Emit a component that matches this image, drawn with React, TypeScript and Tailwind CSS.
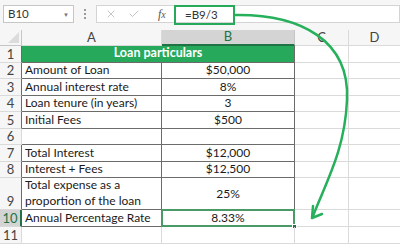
import { X, Check } from 'lucide-react'

type Row = { n: number; a?: string; b?: string; h: string; kind: 'head' | 'table' | 'empty' | 'sel'; topDark?: boolean }

const rows: Row[] = [
  { n: 1, a: 'Loan particulars', h: 'h-[16.5px]', kind: 'head' },
  { n: 2, a: 'Amount of Loan', b: '$50,000', h: 'h-[16.5px]', kind: 'table' },
  { n: 3, a: 'Annual interest rate', b: '8%', h: 'h-[16.5px]', kind: 'table' },
  { n: 4, a: 'Loan tenure (in years)', b: '3', h: 'h-[16.5px]', kind: 'table' },
  { n: 5, a: 'Initial Fees', b: '$500', h: 'h-[16.5px]', kind: 'table' },
  { n: 6, h: 'h-[16.5px]', kind: 'empty', topDark: true },
  { n: 7, a: 'Total Interest', b: '$12,000', h: 'h-[16.5px]', kind: 'table' },
  { n: 8, a: 'Interest + Fees', b: '$12,500', h: 'h-[16.5px]', kind: 'table' },
  { n: 9, a: 'Total expense as a proportion of the loan', b: '25%', h: 'h-[32px]', kind: 'table' },
  { n: 10, a: 'Annual Percentage Rate', b: '8.33%', h: 'h-[17px]', kind: 'sel' },
  { n: 11, h: 'h-[17px]', kind: 'empty' },
]

const grid = 'border-[#dadada]'
const dark = 'border-[#6b6b6b]'

function SheetRow({ r }: { r: Row }) {
  const inTable = r.kind === 'table' || r.kind === 'head' || r.kind === 'sel'
  const sel = r.kind === 'sel'
  return (
    <>
      <div
        className={`${r.h} flex items-end justify-center border-b border-r ${grid} text-[13px] leading-[16px] ${
          sel ? 'bg-[#d4d4d4] text-[#217346] border-r-2 border-r-[#217346]' : 'bg-[#f6f6f6] text-[#444]'
        } ${inTable ? 'border-r-[#6b6b6b]' : ''}`}
      >
        {r.n}
      </div>
      {r.kind === 'head' ? (
        <div className={`${r.h} col-span-2 flex items-center justify-center bg-[#27a95b] border-b border-r ${dark} text-[12.5px] font-bold text-white`}>
          {r.a}
        </div>
      ) : (
        <>
          <div
            className={`${r.h} flex items-end whitespace-nowrap pl-[3px] border-b border-r text-[12px] leading-[16px] text-[#1a1a1a] ${
              inTable || r.topDark ? dark : grid
            }`}
          >
            {r.n === 9 ? (
              <span>
                Total expense as a
                <br />
                proportion of the loan
              </span>
            ) : (
              r.a
            )}
          </div>
          <div
            className={`relative ${r.h} flex items-center justify-center border-b border-r text-[12px] text-[#1a1a1a] ${
              inTable || r.topDark ? dark : grid
            } ${sel ? 'border-r-[#dadada]' : ''}`}
          >
            {r.b}
            {sel && (
              <>
                <div className="absolute -top-px -left-px -right-px -bottom-px border-2 border-[#4a9a68]" />
                <div className="absolute -bottom-[3px] -right-[3px] h-[5px] w-[5px] bg-[#217346] border border-white" />
              </>
            )}
          </div>
        </>
      )}
      <div className={`${r.h} border-b border-r ${grid}`} />
      <div className={`${r.h} border-b ${grid}`} />
    </>
  )
}

export default function App() {
  return (
    <div className="relative w-[400px] h-[244px] overflow-hidden bg-white font-['Lato',sans-serif]">
      {/* formula bar */}
      <div className="h-[30px] flex items-start pt-[5px] bg-[#f6f6f6]">
        <div className="ml-[3px] w-[71px] h-[18px] flex items-center justify-between border border-[#c6c6c6] bg-white pl-[4px] pr-[4px] text-[11.5px] text-[#333]">
          <span>B10</span>
          <span className="text-[6px] text-[#777]">▼</span>
        </div>
        <div className="w-[22px] h-[18px] flex flex-col items-center justify-center gap-[2px]">
          <span className="h-[2px] w-[2px] bg-[#9a9a9a]" />
          <span className="h-[2px] w-[2px] bg-[#9a9a9a]" />
          <span className="h-[2px] w-[2px] bg-[#9a9a9a]" />
        </div>
        <div className="w-[78px] h-[18px] flex items-center border border-r-0 border-[#d4d4d4] bg-white">
          <X className="ml-[8px] h-[12px] w-[12px] text-[#b0b0b0]" strokeWidth={1.5} />
          <Check className="ml-[11px] h-[12px] w-[12px] text-[#b0b0b0]" strokeWidth={1.5} />
          <span className="ml-[18px] font-['Liberation_Serif',serif] italic text-[12px] text-[#555]">
            f<span className="text-[10px]">x</span>
          </span>
        </div>
        <div className="flex-1 h-[18px] border border-[#d4d4d4] bg-white relative">
          <div className="absolute -top-[1px] -left-[1px] w-[61px] h-[20px] border-2 border-[#27a95b] pl-[9px] flex items-center text-[11.5px] text-[#333]">
            =B9/3
          </div>
        </div>
      </div>
      {/* sheet */}
      <div className="grid grid-cols-[22px_140px_133px_54px_1fr]">
        <div className="h-[16px] border-b border-r border-[#c6c6c6] bg-[#f6f6f6] flex items-end justify-end pr-[2px] pb-[2px]">
          <div className="h-0 w-0 border-l-[11px] border-l-transparent border-b-[11px] border-b-[#dcdcdc]" />
        </div>
        <div className="h-[16px] flex items-center justify-center border-b border-r border-[#dadada] bg-[#f6f6f6] text-[13px] text-[#444]">A</div>
        <div className="h-[16px] flex items-center justify-center border-b-2 border-b-[#217346] border-r border-r-[#c6c6c6] bg-[#d4d4d4] text-[13px] text-[#217346]">B</div>
        <div className="h-[16px] flex items-center justify-center border-b border-r border-[#dadada] bg-[#f6f6f6] text-[13px] text-[#444]">C</div>
        <div className="h-[16px] flex items-center justify-center border-b border-[#dadada] bg-[#f6f6f6] text-[13px] text-[#444]">D</div>
        {rows.map((r) => (
          <SheetRow key={r.n} r={r} />
        ))}
      </div>
      {/* arrow */}
      <svg className="absolute inset-0 pointer-events-none" width="400" height="244" viewBox="0 0 400 244">
        <path d="M235 15 C300 14 350 40 347 100 C345 150 326 182 313 216" fill="none" stroke="#27b05c" strokeWidth="2.5" />
        <path d="M313 206 L312 218 L322 214" fill="none" stroke="#27b05c" strokeWidth="2.5" strokeLinecap="round" strokeLinejoin="round" />
      </svg>
    </div>
  )
}
